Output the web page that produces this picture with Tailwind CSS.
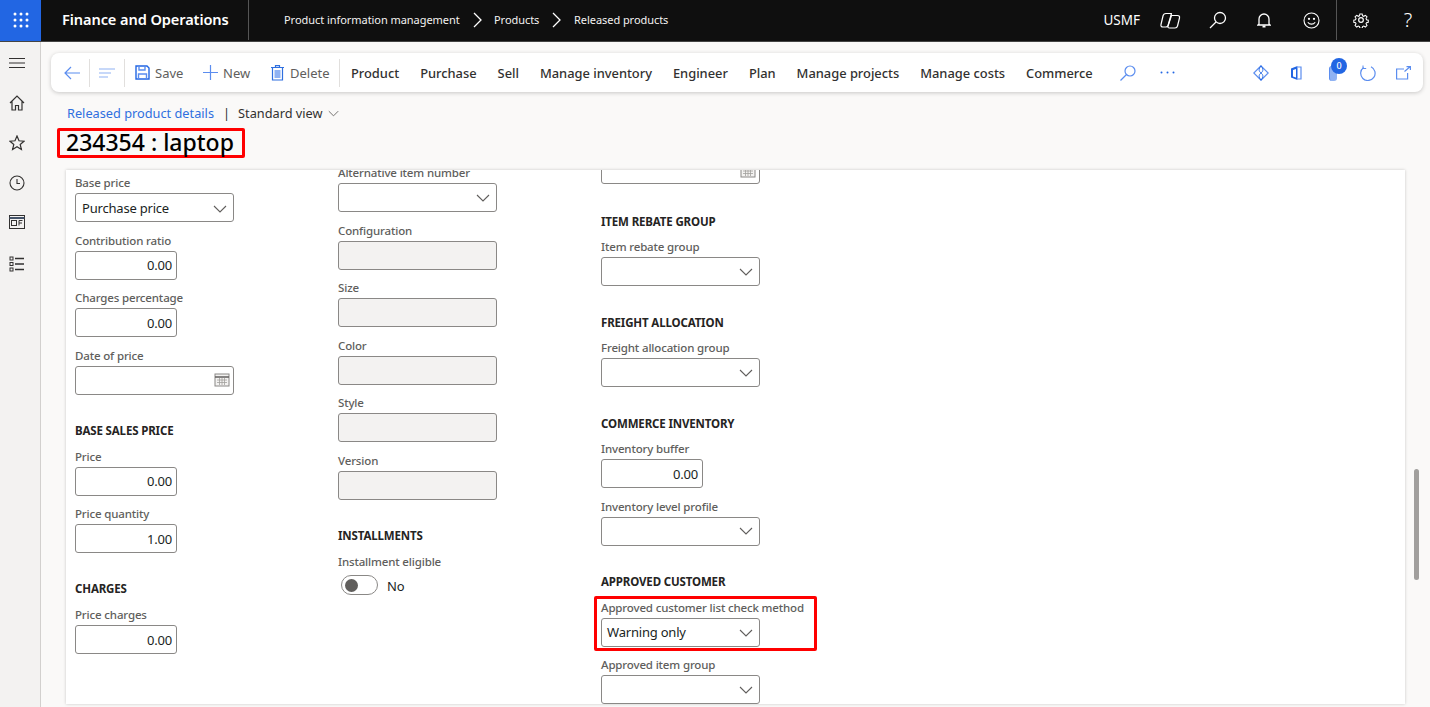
<!DOCTYPE html>
<html lang="en">
<head>
  <meta charset="UTF-8" />
  <title>Released product details</title>
  <script src="https://cdn.jsdelivr.net/npm/@tailwindcss/browser@4"></script>
</head>
<body class="w-[1430px] h-[707px] overflow-hidden bg-[#faf9f8] font-['Noto_Sans',sans-serif] text-[#201f1e]">
  <svg class="hidden">
    <symbol id="chev" viewBox="0 0 14 8"><path d="M1 1l6 6 6-6" fill="none" stroke="#605e5c" stroke-width="1.1"/></symbol>
    <symbol id="cal" viewBox="0 0 16 14"><rect x="1" y="1" width="14" height="12" fill="#f3f2f1" stroke="#8a8886"/><path d="M1 4h14" stroke="#605e5c" stroke-width="1.5"/><path d="M3 7h10M3 9.5h10M5.500 5v7M8 5v7M10.500 5v7" stroke="#a19f9d" stroke-width=".8"/></symbol>
  </svg>

  <!-- top bar -->
  <header class="flex items-center h-[42px] pb-[1px] bg-[#0f0f0f] text-white border-b border-[#444]">
    <div class="flex items-center justify-center w-[41px] h-[42px] bg-[#2266e3]">
      <svg width="16" height="16" viewBox="0 0 16 16" fill="#fff"><circle cx="2" cy="2" r="1.500"/><circle cx="8" cy="2" r="1.500"/><circle cx="14" cy="2" r="1.500"/><circle cx="2" cy="8" r="1.500"/><circle cx="8" cy="8" r="1.500"/><circle cx="14" cy="8" r="1.500"/><circle cx="2" cy="14" r="1.500"/><circle cx="8" cy="14" r="1.500"/><circle cx="14" cy="14" r="1.500"/></svg>
    </div>
    <div class="w-[208px] pl-[21px] h-full flex items-center border-r border-[#555] text-[14.6px] font-semibold tracking-[-0.1px] whitespace-nowrap">Finance and Operations</div>
    <nav class="flex items-center pl-[35px] text-[11px] tracking-[-0.05px] text-[#f3f2f1] whitespace-nowrap">
      <span class="w-[175px]">Product information management</span>
      <svg class="ml-[14px] mr-[11px]" width="10" height="16" viewBox="0 0 10 16"><path d="M1 1l7 7-7 7" fill="none" stroke="#fff" stroke-width="1.300"/></svg>
      <span class="w-[45px]">Products</span>
      <svg class="ml-[13px] mr-[12px]" width="10" height="16" viewBox="0 0 10 16"><path d="M1 1l7 7-7 7" fill="none" stroke="#fff" stroke-width="1.300"/></svg>
      <span>Released products</span>
    </nav>
    <div class="ml-auto flex items-center h-full pr-[11px]">
      <span class="text-[13.5px] mr-[20px]">USMF</span>
      <svg class="mr-[28px]" width="21" height="17" viewBox="0 0 21 17" fill="none" stroke="#fff" stroke-width="1.200" stroke-linejoin="round"><path d="M6 1.500h5.500L8 13.500q-.5 1.500-2 1.500H3q-2.500 0-2-2.500l2-8.500q.5-2.500 3-2.500z"/><path d="M11.500 3.500h6q2.500 0 2 2.500l-2 8q-.5 2-2.500 2H9.500q-2 0-1.500-2z"/></svg>
      <svg class="mr-[30px]" width="18" height="18" viewBox="0 0 18 18" fill="none" stroke="#fff" stroke-width="1.300"><circle cx="11" cy="7" r="5.500"/><path d="M7 11l-6 6"/></svg>
      <svg class="mr-[32px]" width="14" height="16" viewBox="0 0 14 16" fill="none" stroke="#fff" stroke-width="1.300"><path d="M2 12V7a5 5 0 0 1 10 0v5l1 1H1z"/><path d="M5.500 14.500h3" stroke-width="2"/></svg>
      <svg class="mr-[16px]" width="17" height="17" viewBox="0 0 17 17" fill="none" stroke="#fff" stroke-width="1.100"><circle cx="8.500" cy="8.500" r="7.500"/><circle cx="6" cy="6.800" r=".6" fill="#fff"/><circle cx="11" cy="6.800" r=".6" fill="#fff"/><path d="M4.800 10.200c1.800 2.600 5.600 2.600 7.400 0"/></svg>
      <div class="w-px h-full bg-[#555] mr-[16px]"></div>
      <svg class="mr-[28px]" width="16" height="16" viewBox="0 0 24 24" fill="none" stroke="#fff" stroke-width="1.800"><circle cx="12" cy="12" r="3.500"/><path d="M10 1.500h4l.7 3.200 2 .9 2.800-1.700 2.800 2.800-1.700 2.800.9 2 3 .7v3.600l-3 .7-.9 2 1.700 2.800-2.800 2.800-2.800-1.700-2 .9-.7 3h-4l-.7-3-2-.9-2.800 1.700-2.800-2.800 1.700-2.800-.9-2-3-.7v-3.600l3-.7.9-2-1.700-2.800 2.800-2.800 2.800 1.700 2-.9z" transform="translate(1.600 1.600) scale(.87)"/></svg>
      <span class="text-[20px] font-light leading-none w-[22px] text-center">?</span>
    </div>
  </header>

  <div class="flex h-[665px]">
    <!-- left rail -->
    <aside class="w-[41px] shrink-0 bg-[#f3f2f1] border-r border-[#d2d0ce] flex flex-col items-center pt-[15px] pr-[6px]">
      <div class="h-[12px] flex items-center"><svg width="16" height="10" viewBox="0 0 16 10" stroke="#323130" stroke-width="1"><path d="M0 .5h16M0 5h16M0 9.500h16"/></svg></div>
      <div class="mt-[26px] h-[16px]"><svg width="16" height="16" viewBox="0 0 16 16" fill="none" stroke="#323130" stroke-width="1.200"><path d="M1 8l7-7 7 7M3 6.500V15h3.500v-4.500h3V15H13V6.500"/></svg></div>
      <div class="mt-[24px] h-[16px]"><svg width="16" height="16" viewBox="0 0 16 16" fill="none" stroke="#323130" stroke-width="1.200"><path d="M8 1l2 4.800 5 .4-3.800 3.300 1.200 5L8 11.800l-4.400 2.700 1.200-5L1 6.200l5-.4z"/></svg></div>
      <div class="mt-[24px] h-[16px]"><svg width="16" height="16" viewBox="0 0 16 16" fill="none" stroke="#323130" stroke-width="1.100"><circle cx="8" cy="8" r="7"/><path d="M8 4v4.500h3"/></svg></div>
      <div class="mt-[24px] h-[16px]"><svg width="16" height="14" viewBox="0 0 16 14" fill="none" stroke="#323130" stroke-width="1"><rect x=".5" y=".5" width="15" height="13"/><path d="M.5 3h15" stroke-width="2" stroke="#44546a"/><rect x="2.500" y="5.500" width="5" height="5"/><path d="M10 5.500h3.500M10 8h3M10 5.500v5"/></svg></div>
      <div class="mt-[25px] h-[16px]"><svg width="16" height="16" viewBox="0 0 16 16" fill="none" stroke="#323130" stroke-width="1"><rect x="1" y="1" width="3" height="3"/><rect x="1" y="6.500" width="3" height="3"/><rect x="1" y="12" width="3" height="3"/><path d="M6 2.500h9M6 8h9M6 13.500h9" stroke-width="1.300"/></svg></div>
    </aside>

    <main class="flex-1 min-w-0 flex flex-col pl-[10px] pr-[7px] pt-[11px]">
      <!-- action pane -->
      <div class="flex items-center h-[39px] bg-white rounded-lg shadow-[0_1px_4px_rgba(0,0,0,0.2)] whitespace-nowrap text-[13px]">
        <div class="w-[39px] h-[28px] flex items-center justify-center border-r border-[#e1dfdd]">
          <svg class="ml-[3px]" width="16" height="14" viewBox="0 0 16 14" fill="none" stroke="#5b8def" stroke-width="1.200"><path d="M7 1L1 7l6 6M1 7h15"/></svg>
        </div>
        <div class="w-[35px] h-[28px] flex items-center justify-center border-r border-[#e1dfdd]">
          <svg width="16" height="10" viewBox="0 0 16 10" stroke="#8fb2f3" stroke-width="1.200"><path d="M0 1h16M0 5h12M0 9h9"/></svg>
        </div>
        <div class="flex items-center text-[#605e5c] h-[28px] w-[215px] border-r border-[#e1dfdd] pl-[10px]">
          <svg class="mr-[5px]" width="15" height="15" viewBox="0 0 15 15" fill="none" stroke="#2266e3" stroke-width="1.400"><path d="M1 1h11l2 2v11H1z"/><path d="M4 1v4h6V1M3.500 14V9h8v5" stroke="#5b8def"/></svg>
          <span class="w-[28px] pt-[2px]">Save</span>
          <svg class="ml-[20px] mr-[5px]" width="15" height="15" viewBox="0 0 15 15" stroke="#5b8def" stroke-width="1.200"><path d="M7.500 0v15M0 7.500h15"/></svg>
          <span class="w-[27px] pt-[2px]">New</span>
          <svg class="ml-[21px] mr-[6px]" width="13" height="16" viewBox="0 0 13 16" fill="none" stroke="#2f6fdf" stroke-width="1.200"><path d="M0 2.500h13M4.500 2.500V.7h4v1.800M1.500 2.500V15h10V2.500"/><path d="M3.500 5h6v8h-6z" fill="#8fb2f3" stroke="none"/></svg>
          <span class="pt-[2px]">Delete</span>
        </div>
        <div class="flex items-center gap-[21px] pl-[11px] pt-[3px] text-[12.9px] tracking-[-0.02px] font-medium text-[#323130]">
          <span>Product</span><span>Purchase</span><span>Sell</span><span>Manage inventory</span><span>Engineer</span><span>Plan</span><span>Manage projects</span><span>Manage costs</span><span>Commerce</span>
        </div>
        <svg class="ml-[27px]" width="16" height="16" viewBox="0 0 16 16" fill="none" stroke="#5b8def" stroke-width="1.200"><circle cx="10" cy="6" r="5"/><path d="M6.500 9.500L.5 15.500"/></svg>
        <svg class="ml-[24px]" width="15" height="3" viewBox="0 0 15 3" fill="#2266e3"><circle cx="1.500" cy="1.500" r="1"/><circle cx="7.500" cy="1.500" r="1"/><circle cx="13.500" cy="1.500" r="1"/></svg>
        <div class="ml-auto flex items-center pr-[12px]">
          <svg width="16" height="16" viewBox="0 0 16 16" fill="none" stroke="#5b8def" stroke-width="1.200"><path d="M8 .8L15.200 8 8 15.200.8 8z"/><path d="M8 .8C5.500 4 5.500 6 8 8s2.500 4 0 7.200M8 .8c2.500 3.200 2.500 5.200 0 7.200s-2.500 4 0 7.200" stroke="#2266e3" stroke-width=".9"/></svg>
          <svg class="ml-[21px]" width="12" height="16" viewBox="0 0 12 16" fill="none"><path d="M1 3.500L7.500 1v14L1 12.500z" fill="#2266e3"/><path d="M3 5v6.500l3 1V4z" fill="#fff"/><path d="M7.500 2H11v12H7.500" stroke="#5b8def" stroke-width="1.200"/></svg>
          <div class="relative ml-[27px] w-[24px] h-[18px]">
            <div class="absolute left-0 top-[2px] w-[8px] h-[15px] rounded-[3px] bg-[#8fb2f3] border-l border-[#5b8def]"></div>
            <div class="absolute left-[2px] -top-[6px] w-[16px] h-[16px] rounded-full bg-[#2266e3] text-white text-[9px] font-medium leading-[16px] text-center">0</div>
          </div>
          <svg class="ml-[7px]" width="16" height="16" viewBox="0 0 16 16" fill="none" stroke="#5b8def" stroke-width="1.200"><path d="M11 1.800A7.200 7.200 0 1 1 3.600 2.500"/><path d="M3 .5v3h3.200" stroke-width="1"/></svg>
          <svg class="ml-[20px]" width="15" height="14" viewBox="0 0 15 14" fill="none" stroke="#5b8def" stroke-width="1.200"><path d="M8 3H.6v10h11V7"/><path d="M8.500 5.500L14 .8M10.500.6H14.400V4"/></svg>
        </div>
      </div>

      <!-- page header -->
      <div class="pl-[16px] pt-[7px] h-[36px] flex items-center text-[12.75px] whitespace-nowrap">
        <span class="text-[#2f6fdf]">Released product details</span>
        <span class="ml-[9px] mr-[8px] text-[#323130]">|</span>
        <span class="text-[#323130]">Standard view</span>
        <svg class="ml-[5px]" width="11" height="7" viewBox="0 0 14 8"><use href="#chev"/></svg>
      </div>
      <div class="ml-[6px] w-[188px] h-[30px] border-[3px] border-[#f00] rounded-[2px] pl-[6px] text-[23px] font-medium leading-[23px] whitespace-nowrap text-black">234354 : laptop</div>

      <!-- form panel -->
      <section class="mt-[12px] ml-[15px] w-[1339px] h-[534px] shrink-0 bg-white shadow-[0_0_3px_rgba(0,0,0,0.2)] overflow-hidden flex pl-[9px] text-[11.5px] tracking-[-0.15px]">
        <!-- col 1 -->
        <div class="w-[263px] pt-[3px]">
          <div class="h-[57.5px]"><div class="h-[20px] leading-[20px] text-[#605e5c] font-medium">Base price</div><div class="w-[159px] h-[29px] flex items-center justify-between pl-[6px] pr-[6px] pt-[2px] bg-white border border-[#8a8886] rounded-[3px] text-[13px] tracking-[-0.2px]">Purchase price<svg width="14" height="8"><use href="#chev"/></svg></div></div>
          <div class="h-[57.5px]"><div class="h-[20px] leading-[20px] text-[#605e5c] font-medium">Contribution ratio</div><div class="w-[102px] h-[29px] flex items-center justify-end px-[4px] pt-[2px] border border-[#8a8886] rounded-[3px] text-[13px] tracking-[-0.2px]">0.00</div></div>
          <div class="h-[57.5px]"><div class="h-[20px] leading-[20px] text-[#605e5c] font-medium">Charges percentage</div><div class="w-[102px] h-[29px] flex items-center justify-end px-[4px] pt-[2px] border border-[#8a8886] rounded-[3px] text-[13px] tracking-[-0.2px]">0.00</div></div>
          <div class="h-[57.5px]"><div class="h-[20px] leading-[20px] text-[#605e5c] font-medium">Date of price</div><div class="w-[159px] h-[29px] flex items-center justify-end px-[3px] border border-[#8a8886] rounded-[3px]"><svg width="16" height="14"><use href="#cal"/></svg></div></div>
          <div class="mt-[17.500px] h-[26px] leading-[20px] font-bold text-[#252423]">BASE SALES PRICE</div>
          <div class="h-[57.5px]"><div class="h-[20px] leading-[20px] text-[#605e5c] font-medium">Price</div><div class="w-[102px] h-[29px] flex items-center justify-end px-[4px] pt-[2px] border border-[#8a8886] rounded-[3px] text-[13px] tracking-[-0.2px]">0.00</div></div>
          <div class="h-[57.5px]"><div class="h-[20px] leading-[20px] text-[#605e5c] font-medium">Price quantity</div><div class="w-[102px] h-[29px] flex items-center justify-end px-[4px] pt-[2px] border border-[#8a8886] rounded-[3px] text-[13px] tracking-[-0.2px]">1.00</div></div>
          <div class="mt-[17.500px] h-[26px] leading-[20px] font-bold text-[#252423]">CHARGES</div>
          <div class="h-[57.5px]"><div class="h-[20px] leading-[20px] text-[#605e5c] font-medium">Price charges</div><div class="w-[102px] h-[29px] flex items-center justify-end px-[4px] pt-[2px] border border-[#8a8886] rounded-[3px] text-[13px] tracking-[-0.2px]">0.00</div></div>
        </div>
        <!-- col 2 -->
        <div class="w-[263px] -mt-[7px]">
          <div class="h-[57.5px]"><div class="h-[20px] leading-[20px] text-[#605e5c] font-medium">Alternative item number</div><div class="w-[159px] h-[29px] flex items-center justify-end px-[6px] border border-[#8a8886] rounded-[3px]"><svg width="14" height="8"><use href="#chev"/></svg></div></div>
          <div class="h-[57.5px]"><div class="h-[20px] leading-[20px] text-[#605e5c] font-medium">Configuration</div><div class="w-[159px] h-[29px] bg-[#f3f2f1] border border-[#8a8886] rounded-[3px]"></div></div>
          <div class="h-[57.5px]"><div class="h-[20px] leading-[20px] text-[#605e5c] font-medium">Size</div><div class="w-[159px] h-[29px] bg-[#f3f2f1] border border-[#8a8886] rounded-[3px]"></div></div>
          <div class="h-[57.5px]"><div class="h-[20px] leading-[20px] text-[#605e5c] font-medium">Color</div><div class="w-[159px] h-[29px] bg-[#f3f2f1] border border-[#8a8886] rounded-[3px]"></div></div>
          <div class="h-[57.5px]"><div class="h-[20px] leading-[20px] text-[#605e5c] font-medium">Style</div><div class="w-[159px] h-[29px] bg-[#f3f2f1] border border-[#8a8886] rounded-[3px]"></div></div>
          <div class="h-[57.5px]"><div class="h-[20px] leading-[20px] text-[#605e5c] font-medium">Version</div><div class="w-[159px] h-[29px] bg-[#f3f2f1] border border-[#8a8886] rounded-[3px]"></div></div>
          <div class="mt-[17.500px] h-[26px] leading-[20px] font-bold text-[#252423]">INSTALLMENTS</div>
          <div class="h-[20px] leading-[20px] text-[#605e5c] font-medium">Installment eligible</div>
          <div class="flex items-center mt-[3px] ml-[3px]">
            <div class="w-[37px] h-[20px] rounded-full border border-[#8a8886] flex items-center pl-[3px]"><div class="w-[13px] h-[13px] rounded-full bg-[#605e5c]"></div></div>
            <span class="ml-[9px] pt-[2px] text-[13px]">No</span>
          </div>
        </div>
        <!-- col 3 -->
        <div class="w-[263px] -mt-[16px]">
          <div class="w-[159px] h-[30px] flex items-end justify-end px-[3px] pb-[5px] border border-[#8a8886] rounded-[3px]"><svg width="16" height="14"><use href="#cal"/></svg></div>
          <div class="mt-[27px] h-[26px] leading-[21px] font-bold text-[#252423]">ITEM REBATE GROUP</div>
          <div class="h-[57.5px]"><div class="h-[20px] leading-[20px] text-[#605e5c] font-medium">Item rebate group</div><div class="w-[159px] h-[29px] flex items-center justify-end px-[6px] border border-[#8a8886] rounded-[3px]"><svg width="14" height="8"><use href="#chev"/></svg></div></div>
          <div class="mt-[17.500px] h-[26px] leading-[21px] font-bold text-[#252423]">FREIGHT ALLOCATION</div>
          <div class="h-[57.5px]"><div class="h-[20px] leading-[20px] text-[#605e5c] font-medium">Freight allocation group</div><div class="w-[159px] h-[29px] flex items-center justify-end px-[6px] border border-[#8a8886] rounded-[3px]"><svg width="14" height="8"><use href="#chev"/></svg></div></div>
          <div class="mt-[17.500px] h-[26px] leading-[22px] font-bold text-[#252423]">COMMERCE INVENTORY</div>
          <div class="h-[57.5px]"><div class="h-[20px] leading-[20px] text-[#605e5c] font-medium">Inventory buffer</div><div class="w-[102px] h-[29px] flex items-center justify-end px-[4px] pt-[2px] border border-[#8a8886] rounded-[3px] text-[13px] tracking-[-0.2px]">0.00</div></div>
          <div class="h-[57.5px]"><div class="h-[20px] leading-[20px] text-[#605e5c] font-medium">Inventory level profile</div><div class="w-[159px] h-[29px] flex items-center justify-end px-[6px] border border-[#8a8886] rounded-[3px]"><svg width="14" height="8"><use href="#chev"/></svg></div></div>
          <div class="mt-[17.500px] h-[26px] leading-[20px] font-bold text-[#252423]">APPROVED CUSTOMER</div>
          <div class="relative h-[57.5px]">
            <div class="h-[20px] leading-[20px] text-[#605e5c] font-medium whitespace-nowrap">Approved customer list check method</div>
            <div class="w-[159px] h-[29px] flex items-center justify-between pl-[5px] pr-[6px] pt-[2px] border border-[#8a8886] rounded-[3px] text-[13px] tracking-[-0.2px]">Warning only<svg width="14" height="8"><use href="#chev"/></svg></div>
            <div class="absolute -left-[7px] -top-[2px] w-[223px] h-[55px] border-[3px] border-[#f00] rounded-[2px]"></div>
          </div>
          <div class="h-[57.5px]"><div class="h-[20px] leading-[20px] text-[#605e5c] font-medium">Approved item group</div><div class="w-[159px] h-[29px] flex items-center justify-end px-[6px] border border-[#8a8886] rounded-[3px]"><svg width="14" height="8"><use href="#chev"/></svg></div></div>
        </div>
      </section>
    </main>
  </div>

  <!-- scroll thumb lies over the page margin -->
  <div class="absolute left-[1414px] top-[469px] w-[5px] h-[111px] rounded-full bg-[#a19f9d]"></div>
</body>
</html>
